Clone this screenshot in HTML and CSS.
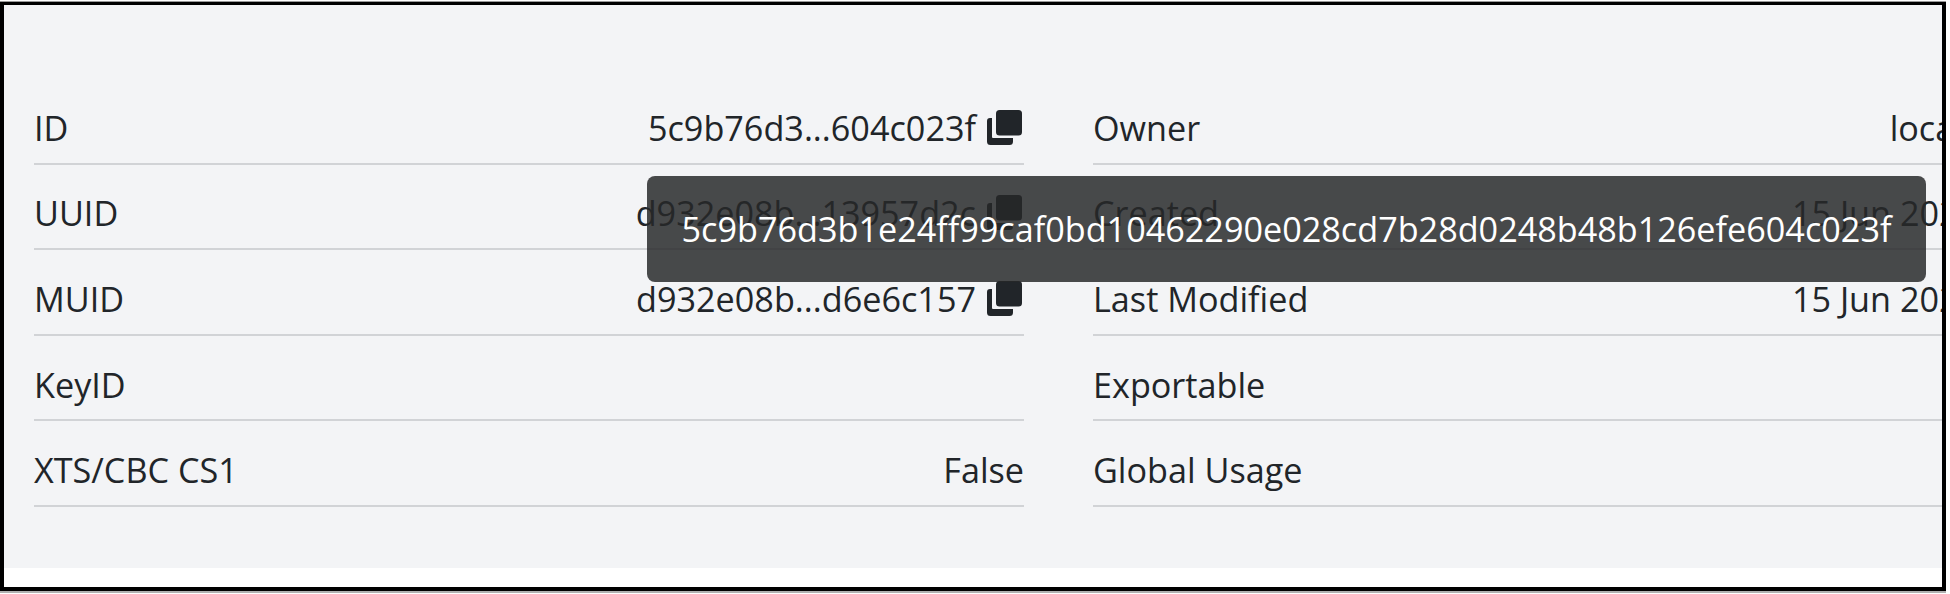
FILE: index.html
```html
<!DOCTYPE html>
<html lang="en">
<head>
    <meta charset="UTF-8">
    <title>Key details</title>
    <link rel="stylesheet" href="styles.css">
</head>
<body>
    <div class="frame">
        <div class="panel">
            <div class="details">
                <div class="column">
                    <div class="row"><span>ID</span>
                        <span class="value">5c9b76d3...604c023f
                            <svg class="copy" viewBox="0 0 35 35"><rect x="9" y="0" width="26" height="25.500" rx="3.500"/><path d="M5 8v19a1 1 0 0 0 1 1h20v3.500a3.500 3.500 0 0 1-3.500 3.500H3.500A3.500 3.500 0 0 1 0 31.500V11a3 3 0 0 1 3-3z"/></svg>
                        </span>
                    </div>
                    <div class="row"><span>UUID</span>
                        <span class="value">d932e08b...13957d2c
                            <svg class="copy" viewBox="0 0 35 35"><rect x="9" y="0" width="26" height="25.500" rx="3.500"/><path d="M5 8v19a1 1 0 0 0 1 1h20v3.500a3.500 3.500 0 0 1-3.500 3.500H3.500A3.500 3.500 0 0 1 0 31.500V11a3 3 0 0 1 3-3z"/></svg>
                        </span>
                    </div>
                    <div class="row"><span>MUID</span>
                        <span class="value">d932e08b...d6e6c157
                            <svg class="copy" viewBox="0 0 35 35"><rect x="9" y="0" width="26" height="25.500" rx="3.500"/><path d="M5 8v19a1 1 0 0 0 1 1h20v3.500a3.500 3.500 0 0 1-3.500 3.500H3.500A3.500 3.500 0 0 1 0 31.500V11a3 3 0 0 1 3-3z"/></svg>
                        </span>
                    </div>
                    <div class="row"><span>KeyID</span></div>
                    <div class="row"><span>XTS/CBC CS1</span><span class="value">False</span></div>
                </div>
                <div class="column">
                    <div class="row"><span>Owner</span><span class="value owner">local_admin</span></div>
                    <div class="row"><span>Created</span><span class="value">15 Jun 2023, 10:30</span></div>
                    <div class="row"><span>Last Modified</span><span class="value">15 Jun 2023, 10:30</span></div>
                    <div class="row"><span>Exportable</span></div>
                    <div class="row"><span>Global Usage</span></div>
                </div>
            </div>
            <div class="tooltip">5c9b76d3b1e24ff99caf0bd10462290e028cd7b28d0248b48b126efe604c023f</div>
        </div>
    </div>
</body>
</html>
```

FILE: styles.css
```css
html, body {
    margin: 0;
    height: 100%;
    background: #fff;
}
body {
    padding: 2px 4px 3px 0;
    box-sizing: border-box;
    font-family: "Open Sans", sans-serif;
    font-size: 34.2px;
    color: #212529;
}
.frame {
    height: 100%;
    box-sizing: border-box;
    border: solid #000;
    border-width: 3px 4px 4px;
    background: #fff;
    box-shadow: 0 -1px 0 #9a9a9a, 0 2px 0 #b0b0b0;
    overflow: hidden;
}
.panel {
    position: relative;
    height: 563px;
    padding-left: 30px;
    box-sizing: border-box;
    background: #f3f4f6;
    overflow: hidden;
}
.details {
    display: grid;
    grid-template-columns: 990px 990px;
    column-gap: 69px;
    padding-top: 74px;
}
.row {
    display: flex;
    justify-content: space-between;
    align-items: center;
    height: 85.6px;
    padding-top: 13px;
    box-sizing: border-box;
    border-bottom: 2px solid #d1d3d6;
    white-space: nowrap;
}
.value {
    display: flex;
    align-items: center;
    gap: 11px;
}
.owner {
    margin-right: 4px;
}
.copy {
    width: 35px;
    height: 35px;
    margin-right: 2px;
    fill: #212529;
}
.tooltip {
    position: absolute;
    left: 643px;
    top: 171px;
    width: 1279px;
    height: 106px;
    padding-top: 30px;
    box-sizing: border-box;
    text-align: center;
    line-height: 46px;
    color: #fff;
    background: rgba(38, 39, 41, 0.84);
    border-radius: 8px;
}
```
